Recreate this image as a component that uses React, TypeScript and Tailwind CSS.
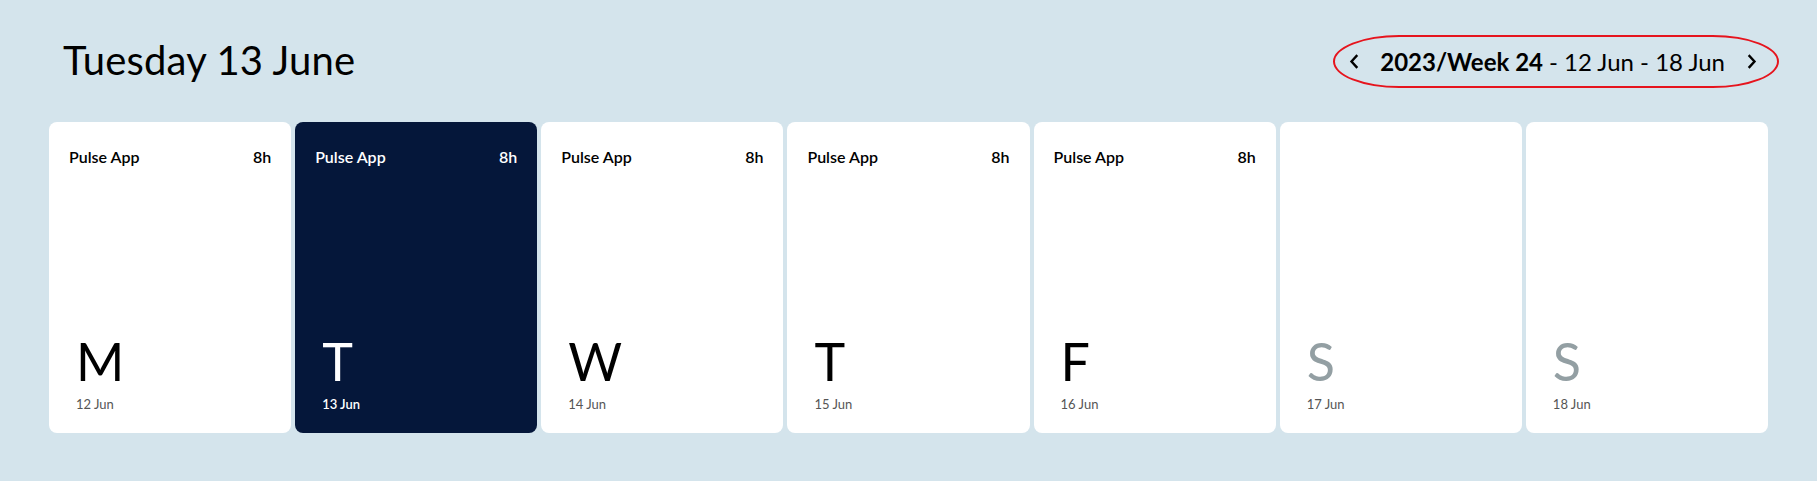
interface Day {
  letter: string;
  date: string;
  project?: string;
  hours?: string;
  weekend?: boolean;
}

// One week of booked hours
const days: Day[] = [
  { letter: 'M', date: '12 Jun', project: 'Pulse App', hours: '8h' },
  { letter: 'T', date: '13 Jun', project: 'Pulse App', hours: '8h' },
  { letter: 'W', date: '14 Jun', project: 'Pulse App', hours: '8h' },
  { letter: 'T', date: '15 Jun', project: 'Pulse App', hours: '8h' },
  { letter: 'F', date: '16 Jun', project: 'Pulse App', hours: '8h' },
  { letter: 'S', date: '17 Jun', weekend: true },
  { letter: 'S', date: '18 Jun', weekend: true },
];

const selectedIndex = 1;

const Chevron = ({ dir }: { dir: 'left' | 'right' }) => (
  <svg width="10" height="15" viewBox="0 0 10 15" fill="none" stroke="currentColor" strokeWidth="2.4" strokeLinecap="square">
    {dir === 'left' ? <polyline points="7.5,2 2.5,7.5 7.5,13" /> : <polyline points="2.5,2 7.5,7.5 2.5,13" />}
  </svg>
);

export default function App() {
  return (
    <div className="min-h-screen w-full bg-[#d4e4ec] px-[49px] pt-[24px] font-['Lato',sans-serif] text-black">
      {/* Header */}
      <div className="flex items-center justify-between h-[72px]">
        <h1 className="ml-[14px] text-[40px] font-normal tracking-[0.2px]">Tuesday 13 June</h1>

        <div className="relative mr-[11px] mt-[3px] flex items-center text-[24px] leading-[29px]">
          {/* red annotation ring */}
          <span className="pointer-events-none absolute -left-[16px] -right-[22px] -top-[12px] -bottom-[12px] rounded-[70px/28px] border-2 border-[#e6141d]" />
          <button className="flex items-center text-black">
            <Chevron dir="left" />
          </button>
          <div className="ml-[21px] flex items-baseline gap-[6px]">
            <span className="font-bold">2023/Week 24</span>
            <span>- 12 Jun - 18 Jun</span>
          </div>
          <button className="ml-[22px] flex items-center text-black">
            <Chevron dir="right" />
          </button>
        </div>
      </div>

      {/* Week cards */}
      <div className="mt-[26px] grid grid-cols-7 gap-[4px]">
        {days.map((day, index) => {
          const selected = index === selectedIndex;
          return (
            <div
              key={day.date}
              className={`flex h-[311px] flex-col justify-between rounded-lg pt-[23px] pb-[19px] ${
                selected ? 'bg-[#05173a] text-white' : 'bg-white text-black'
              }`}
            >
              <div className="flex items-center justify-between px-[20px] text-[16px] font-semibold h-[24px]">
                {day.project && <span>{day.project}</span>}
                {day.hours && <span>{day.hours}</span>}
              </div>

              <div className="px-[27px]">
                <div
                  className={`text-[52px] leading-none font-normal ${
                    day.weekend ? 'text-[#939fa3]' : selected ? 'text-white' : 'text-black'
                  }`}
                >
                  {day.letter}
                </div>
                <div
                  className={`mt-[8px] text-[13px] ${
                    selected ? 'text-white font-semibold' : 'text-[#555]'
                  }`}
                >
                  {day.date}
                </div>
              </div>
            </div>
          );
        })}
      </div>
    </div>
  );
}
